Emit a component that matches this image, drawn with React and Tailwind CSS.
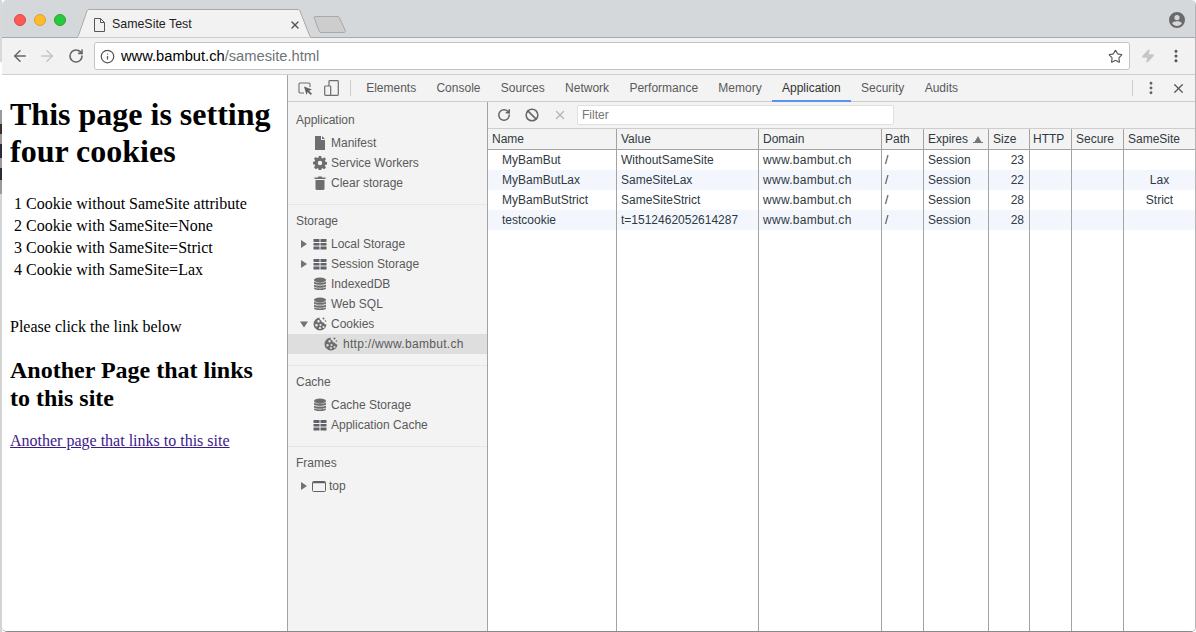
import { Info, RotateCw, ArrowLeft, ArrowRight, Star, X, Zap, EllipsisVertical, Ban } from "lucide-react";

const panelTabs = ["Elements", "Console", "Sources", "Network", "Performance", "Memory", "Application", "Security", "Audits"];

const columns = [
  { name: "Name", width: "w-[129px]" },
  { name: "Value", width: "w-[142px]" },
  { name: "Domain", width: "w-[123px]" },
  { name: "Path", width: "w-[42px]" },
  { name: "Expires", width: "w-[65px]" },
  { name: "Size", width: "w-[41px]" },
  { name: "HTTP", width: "w-[42px]" },
  { name: "Secure", width: "w-[52px]" },
  { name: "SameSite", width: "flex-1" },
];

const cookies = [
  ["MyBamBut", "WithoutSameSite", "www.bambut.ch", "/", "Session", "23", "", "", ""],
  ["MyBamButLax", "SameSiteLax", "www.bambut.ch", "/", "Session", "22", "", "", "Lax"],
  ["MyBamButStrict", "SameSiteStrict", "www.bambut.ch", "/", "Session", "28", "", "", "Strict"],
  ["testcookie", "t=1512462052614287", "www.bambut.ch", "/", "Session", "28", "", "", ""],
];

const GridIcon = () => (
  <svg width="14" height="12" viewBox="0 0 14 12" fill="#5f6368">
    <rect x="0.5" y="1" width="6" height="3" />
    <rect x="7.5" y="1" width="6" height="3" />
    <rect x="0.5" y="5" width="6" height="2.5" />
    <rect x="7.5" y="5" width="6" height="2.5" />
    <rect x="0.5" y="8.5" width="6" height="3" />
    <rect x="7.5" y="8.5" width="6" height="3" />
  </svg>
);

const DbIcon = () => (
  <svg width="14" height="14" viewBox="0 0 14 14" fill="#6e6e6e">
    <ellipse cx="7" cy="3" rx="6" ry="2.4" />
    <path d="M1 4.4c1 1.6 11 1.6 12 0v2c-1 1.8-11 1.8-12 0z" />
    <path d="M1 7.4c1 1.6 11 1.6 12 0v2c-1 1.8-11 1.8-12 0z" />
    <path d="M1 10.2c1 1.6 11 1.6 12 0v1.2c-1 2.2-11 2.2-12 0z" />
  </svg>
);

const CookieIcon = () => (
  <svg width="14" height="14" viewBox="0 0 14 14">
    <path
      fill="#6e6e6e"
      fillRule="evenodd"
      d="M6.500.5a6.500 6.500 0 1 0 7 7c-1.300.2-2.300-.6-2.500-1.900-1.400.2-2.600-.8-2.700-2.200C7.200 3.300 6.300 2 6.500.5zM5.500 3a1.200 1.200 0 1 1 0 2.400 1.200 1.200 0 0 1 0-2.400zM3.500 7a1.200 1.200 0 1 1 0 2.400 1.200 1.200 0 0 1 0-2.400zM7.500 7a1 1 0 1 1 0 2 1 1 0 0 1 0-2zM7 10a1.100 1.100 0 1 1 0 2.200A1.100 1.100 0 0 1 7 10zM10.500 9a1 1 0 1 1 0 2 1 1 0 0 1 0-2z"
    />
    <circle cx="10.500" cy="1.500" r="1" fill="#6e6e6e" />
    <circle cx="12.500" cy="4" r="0.800" fill="#6e6e6e" />
  </svg>
);

const FileIcon = () => (
  <svg width="12" height="14" viewBox="0 0 12 14" fill="#6e6e6e">
    <path d="M1 0h6v4h4v10H1z" />
    <path d="M8 0l3 3H8z" />
  </svg>
);

const GearIcon = () => (
  <svg width="14" height="14" viewBox="0 0 14 14">
    <path
      fill="#6e6e6e"
      d="M5.8 0h2.4l.3 1.9 1.2.5L11.3 1.300l1.700 1.700-1.100 1.600.5 1.200 1.900.3v2.400l-1.900.3-.5 1.200 1.100 1.600-1.700 1.700-1.600-1.100-1.200.5-.3 1.900H5.800l-.3-1.900-1.200-.5-1.600 1.100L1 11.300l1.100-1.600-.5-1.200L-.3 8.200V5.800l1.900-.3.5-1.200L1 2.700 2.700 1l1.600 1.100 1.200-.5z"
    />
    <circle cx="7" cy="7" r="2.2" fill="#f3f3f3" />
  </svg>
);

const TrashIcon = () => (
  <svg width="12" height="14" viewBox="0 0 12 14" fill="#6e6e6e">
    <path d="M0.500 1.500h3.500V.5h4v1h3.500v1.500H.5z" />
    <path d="M1.500 4h9v8.500c0 .8-.6 1.500-1.400 1.500H2.900c-.8 0-1.400-.7-1.400-1.500z" />
  </svg>
);

const FrameIcon = () => (
  <svg width="14" height="12" viewBox="0 0 14 12" fill="none" stroke="#5f6368">
    <rect x="0.500" y="1.500" width="13" height="10" rx="1" />
    <path d="M1 2.500h12" strokeWidth="1.500" />
  </svg>
);

const Caret = ({ open }) => (
  <svg width="8" height="8" viewBox="0 0 8 8" fill="#727272" className="shrink-0">
    {open ? <path d="M0 1.500h8L4 7.500z" /> : <path d="M1 0l6 4-6 4z" />}
  </svg>
);

const SidebarItem = ({ icon, label, caret, open, indent = "pl-[25px]", active, gap = "gap-[4px]", wide }) => (
  <div className={`h-5 flex items-center ${gap} ${indent} ${active ? "bg-[#dedede]" : ""}`}>
    {caret !== undefined && <Caret open={open} />}
    <span className="w-[14px] flex justify-center shrink-0">{icon}</span>
    <span className={`whitespace-nowrap ${wide ? "tracking-[0.3px]" : ""}`}>{label}</span>
  </div>
);

const Section = ({ title, children, last }) => (
  <div className={`pt-[6px] pb-[11px] ${last ? "" : "border-b border-[#e6e6e6]"}`}>
    <div className="h-5 mb-[3px] flex items-center pl-2">{title}</div>
    {children}
  </div>
);

const Sidebar = () => (
  <div className="w-[200px] shrink-0 pt-[2px] bg-[#f3f3f3] border-r border-[#a3a3a3] text-[12px] text-[#5a5a5a]">
    <Section title="Application">
      <SidebarItem icon={<FileIcon />} label="Manifest" />
      <SidebarItem icon={<GearIcon />} label="Service Workers" />
      <SidebarItem icon={<TrashIcon />} label="Clear storage" />
    </Section>
    <Section title="Storage">
      <SidebarItem caret indent="pl-[12px]" gap="gap-[4.5px]" icon={<GridIcon />} label="Local Storage" />
      <SidebarItem caret indent="pl-[12px]" gap="gap-[4.5px]" icon={<GridIcon />} label="Session Storage" />
      <SidebarItem icon={<DbIcon />} label="IndexedDB" />
      <SidebarItem icon={<DbIcon />} label="Web SQL" />
      <SidebarItem caret open indent="pl-[12px]" gap="gap-[4.5px]" icon={<CookieIcon />} label="Cookies" />
      <SidebarItem active wide indent="pl-[36px]" gap="gap-[5px]" icon={<CookieIcon />} label="http://www.bambut.ch" />
    </Section>
    <Section title="Cache">
      <SidebarItem icon={<DbIcon />} label="Cache Storage" />
      <SidebarItem icon={<GridIcon />} label="Application Cache" />
    </Section>
    <Section title="Frames" last>
      <SidebarItem caret indent="pl-[12px]" gap="gap-[3.5px]" icon={<FrameIcon />} label="top" />
    </Section>
  </div>
);

const CookieTable = () => (
  <div className="relative flex-1 bg-white text-[12px] text-[#303942]">
    {/* header */}
    <div className="flex h-[21px] bg-[#f3f3f3] border-b border-[#a3a3a3]">
      {columns.map((col, i) => (
        <div
          key={col.name}
          className={`${col.width} flex items-center justify-between pr-[5px] whitespace-nowrap ${i === 3 || i === 6 ? "pl-[3px]" : "pl-1"} ${i < 8 ? "border-r border-[#a3a3a3]" : ""}`}
        >
          {col.name}
          {col.name === "Expires" && (
            <svg width="10" height="7" viewBox="0 0 10 7" fill="#777">
              <path d="M5 0l3.500 6H10v1H0V6h1.500z" />
            </svg>
          )}
        </div>
      ))}
    </div>
    {cookies.map((row, r) => (
      <div key={row[0]} className={`flex h-5 ${r % 2 ? "bg-[#f3f7fd]" : ""}`}>
        {row.map((cell, i) => (
          <div
            key={i}
            className={`${columns[i].width} flex items-center whitespace-nowrap px-1 ${i === 0 ? "pl-[14px]" : ""} ${i === 2 ? "tracking-[0.3px]" : ""} ${i === 3 ? "pl-[3px]" : ""} ${i === 5 ? "justify-end pr-[6px]" : ""} ${i === 8 ? "justify-center" : ""}`}
          >
            {cell}
          </div>
        ))}
      </div>
    ))}
    {/* column lines run the full height of the grid */}
    <div className="absolute inset-0 top-[21px] flex pointer-events-none">
      {columns.slice(0, 8).map((col) => (
        <div key={col.name} className={`${col.width} border-r border-[#a3a3a3]`} />
      ))}
    </div>
  </div>
);

const DevTools = () => (
  <div className="flex-1 min-w-0 flex flex-col bg-[#f3f3f3] font-['Liberation_Sans',sans-serif] text-[12px]">
    <div className="h-[27px] shrink-0 flex items-center border-b border-[#cdcdcd] text-[#5a5a5a]">
      <div className="flex items-center gap-[11px] pl-[10px] pr-[11px] border-r border-[#cdcdcd] h-4 mr-[5px]">
        <svg width="15" height="15" viewBox="0 0 15 15" fill="none">
          <path d="M6 12H2a1 1 0 0 1-1-1V3a1 1 0 0 1 1-1h9a1 1 0 0 1 1 1v3" stroke="#6e6e6e" strokeWidth="1.100" />
          <path d="M6 5.500l8 3-3 1.200 3 3-1.300 1.300-3-3L8.500 14z" fill="#5f6368" />
        </svg>
        <svg width="15" height="16" viewBox="0 0 15 16" fill="none" stroke="#6e6e6e" strokeWidth="1.200">
          <rect x="5" y="0.700" width="9.300" height="14.600" rx="0.800" />
          <rect x="0.700" y="6" width="6" height="9.300" rx="0.800" fill="#f3f3f3" />
        </svg>
      </div>
      <div className="flex h-full">
        {panelTabs.map((tab) => (
          <div
            key={tab}
            className={`px-[10.15px] flex items-center whitespace-nowrap ${tab === "Application" ? "text-[#333] border-b-2 border-[#5a94f0] pt-[1px] -mb-px" : ""}`}
          >
            {tab}
          </div>
        ))}
      </div>
      <div className="ml-auto flex items-center h-full">
        <div className="h-4 border-l border-[#cdcdcd] mr-[10px]" />
        <EllipsisVertical size={16} strokeWidth={2.4} color="#666" />
        <X size={15} strokeWidth={2} color="#555" className="ml-[12px] mr-[9px]" />
      </div>
    </div>
    <div className="flex-1 flex min-h-0">
      <Sidebar />
      <div className="flex-1 min-w-0 flex flex-col">
        <div className="h-[27px] shrink-0 flex items-center border-b border-[#cdcdcd] pl-[9px]">
          <RotateCw size={14} strokeWidth={2.6} color="#666" />
          <Ban size={14} strokeWidth={2.6} color="#666" className="ml-[14px]" />
          <X size={14} strokeWidth={2.4} color="#b5b5b5" className="ml-[14px]" />
          <div className="ml-[10px] w-[317px] h-[20px] bg-white border border-[#e0e0e0] rounded-[2px] flex items-center pl-1 text-[#757575]">
            Filter
          </div>
        </div>
        <CookieTable />
      </div>
    </div>
  </div>
);

const PageContent = () => (
  <div className="w-[286px] shrink-0 bg-white border-r border-[#a3a3a3] font-['Liberation_Serif',serif] text-black text-[16px] pl-2 pr-[9px]">
    <h1 className="text-[32px] font-bold leading-[37px] mt-[21px] mb-[23px]">This page is setting four cookies</h1>
    <div className="pl-1 leading-[22px]">
      <div>1 Cookie without SameSite attribute</div>
      <div>2 Cookie with SameSite=None</div>
      <div>3 Cookie with SameSite=Strict</div>
      <div>4 Cookie with SameSite=Lax</div>
    </div>
    <p className="mt-[37px] leading-[18px]">Please click the link below</p>
    <h2 className="text-[24px] font-bold leading-[28px] mt-[20px] mb-[17px]">Another Page that links to this site</h2>
    <a href="#" className="underline text-[#3c1a8c] leading-[18px]">Another page that links to this site</a>
  </div>
);

export default function App() {
  return (
    <div className="w-[1196px] h-[632px] overflow-hidden bg-white flex">
      {/* sliver of the window behind */}
      <div className="w-[2px] shrink-0 flex flex-col">
        <div className="h-[62px] bg-[#d8d8d8]" />
        <div className="h-[48px] bg-white" />
        <div className="h-[14px] bg-[#9a9a9a]" />
        <div className="h-[10px] bg-[#3a3028]" />
        <div className="h-[10px] bg-[#9a9a9a]" />
        <div className="h-[14px] bg-[#2c2c34]" />
        <div className="h-[10px] bg-[#9a9a9a]" />
        <div className="h-[12px] bg-[#2c2c34]" />
        <div className="h-[14px] bg-[#9a9a9a]" />
        <div className="flex-1 bg-[#d4d4d4]" />
      </div>
      <div className="flex-1 min-w-0 h-full rounded-[5px] overflow-hidden border-r border-b border-r-[#b5b5b5] border-b-[#8a8a8a] flex flex-col font-['Liberation_Sans',sans-serif]">
        {/* tab strip */}
        <div className="h-[38px] shrink-0 bg-[#d5d8da] border-b border-[#a9a9a9] flex items-end relative">
          <div className="flex gap-2 absolute left-[12px] top-[14px]">
            <span className="w-3 h-3 rounded-full bg-[#fc5b57] border border-[#e0443e]" />
            <span className="w-3 h-3 rounded-full bg-[#fdbc2e] border border-[#dea123]" />
            <span className="w-3 h-3 rounded-full bg-[#28c940] border border-[#1aab29]" />
          </div>
          <div className="relative ml-[72px] w-[242px] h-[29px] -mb-px flex items-center pl-[20px] pr-[15px] pt-[2px] text-[12.4px] text-[#222]">
            <svg className="absolute inset-0" width="242" height="29" viewBox="0 0 242 29">
              <path d="M0 29c3 0 4-1 5-4L13 2c.4-1 1-1.500 2-1.500h209c1 0 1.600.5 2 1.500l9 23c1 3 2 4 5 4z" fill="#f2f2f2" stroke="#a9a9a9" />
            </svg>
            <svg className="relative" width="11" height="14" viewBox="0 0 11 14" fill="none" stroke="#555">
              <path d="M.5.500h6l4 4v9H.5zM6.500.5v4h4" />
            </svg>
            <span className="relative ml-[8px] -translate-x-px">SameSite Test</span>
            <X size={12} strokeWidth={2.800} color="#555" className="relative ml-auto" />
          </div>
          <svg className="mb-[4px] -ml-[3px]" width="34" height="17" viewBox="0 0 34 17">
            <path d="M1 1.500c0-.5.4-1 1-1h23c.6 0 1 .3 1.300 1l6 13c.3.8 0 2-1 2H8c-1 0-1.400-.5-1.800-1.300z" fill="#cdcdcd" stroke="#a9a9a9" />
          </svg>
          <svg className="absolute right-[10px] top-[12px]" width="16" height="16" viewBox="0 0 16 16" fill="#6a6a6a">
            <path fillRule="evenodd" d="M8 0a8 8 0 1 0 0 16A8 8 0 0 0 8 0zm0 3a2.600 2.600 0 1 1 0 5.200A2.600 2.600 0 0 1 8 3zm0 11c-2 0-3.800-1-4.800-2.500C3.300 10 6.400 9.300 8 9.300s4.700.7 4.800 2.200C11.800 13 10 14 8 14z" />
          </svg>
        </div>
        {/* address bar */}
        <div className="h-[37px] shrink-0 bg-[#f2f2f2] border-b border-[#cfcfcf] flex items-center pl-[9px]">
          <ArrowLeft size={18} strokeWidth={2} color="#666" />
          <ArrowRight size={18} strokeWidth={2} color="#c6c6c6" className="ml-[9px]" />
          <RotateCw size={16} strokeWidth={2.400} color="#666" className="ml-[12px]" />
          <div className="ml-[10px] w-[1036px] h-[28px] bg-white border border-[#c4c4c4] rounded-[3px] flex items-center pl-[5px] pr-[6px] text-[14.7px]">
            <Info size={15} strokeWidth={2} color="#555" />
            <span className="ml-[6px] text-black">www.bambut.ch</span>
            <span className="text-[#6f7479]">/samesite.html</span>
            <Star size={15} strokeWidth={1.800} color="#555" className="ml-auto" />
          </div>
          <Zap size={14} fill="#c6c6c6" color="#c6c6c6" className="ml-[11px]" />
          <EllipsisVertical size={16} strokeWidth={2.600} color="#555" className="ml-[13px]" />
        </div>
        {/* content */}
        <div className="flex-1 flex min-h-0">
          <PageContent />
          <DevTools />
        </div>
      </div>
    </div>
  );
}
